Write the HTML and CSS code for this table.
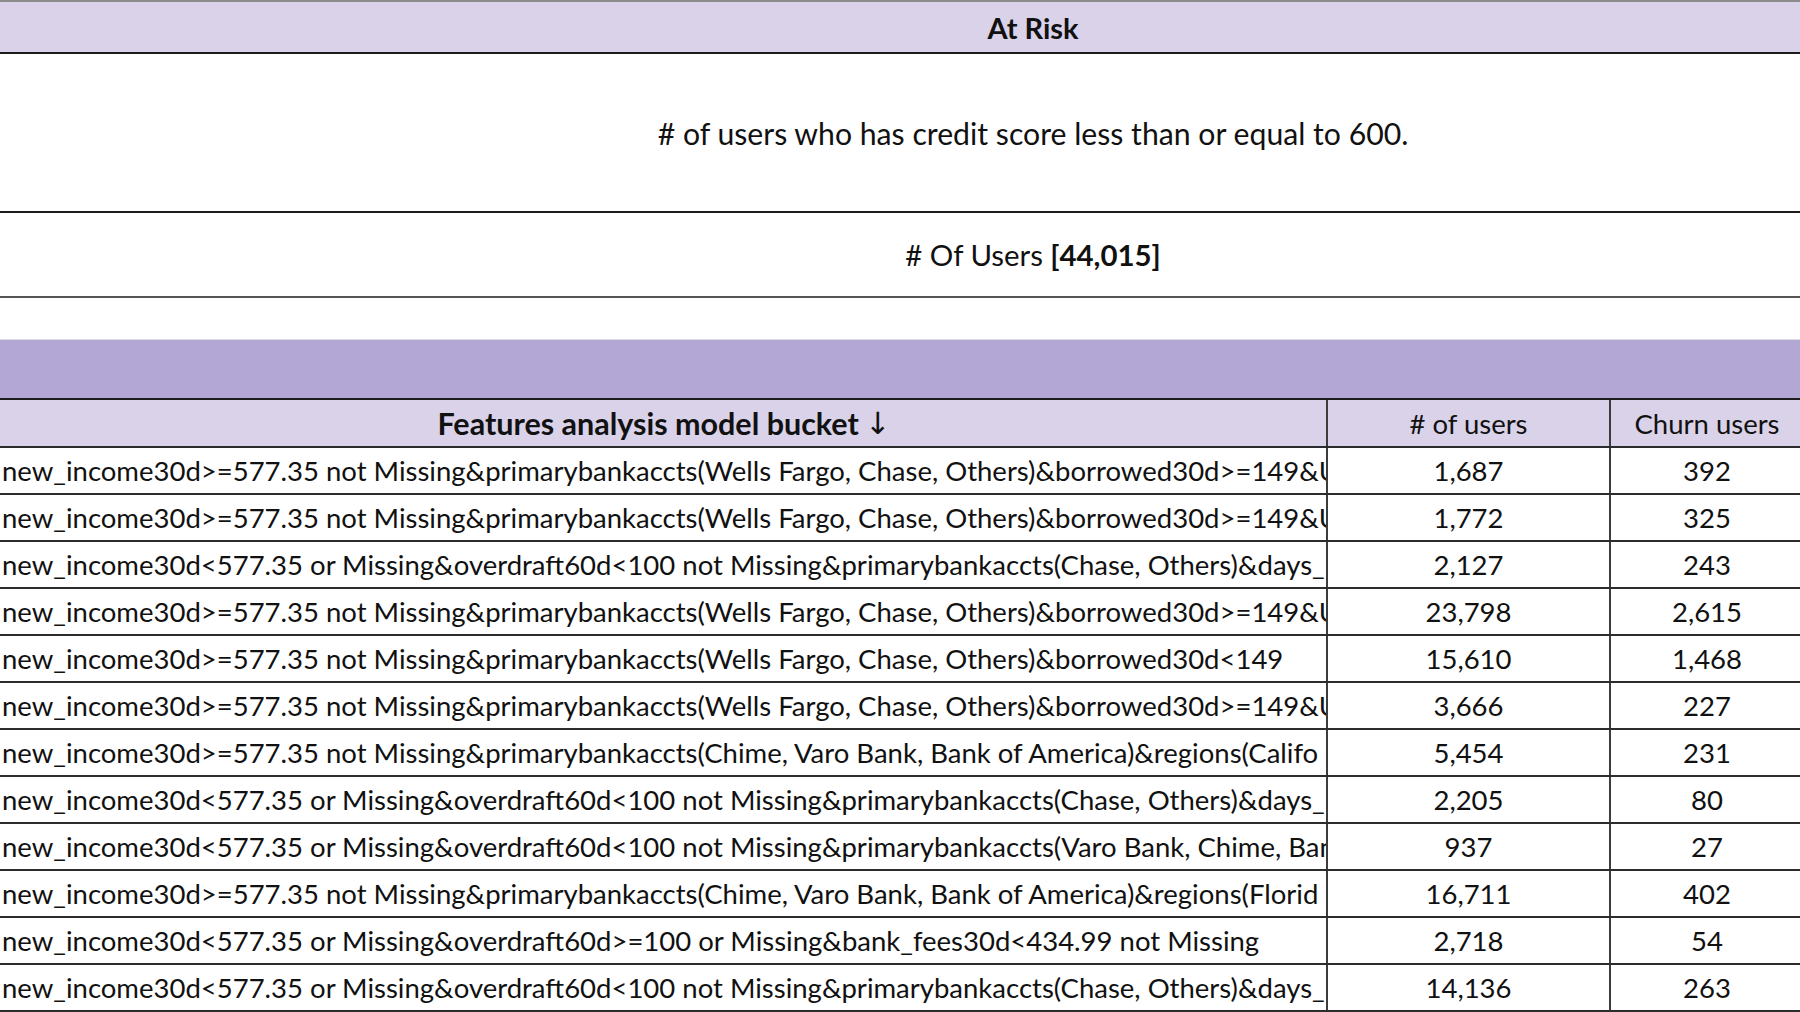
FILE: index.html
```html
<!DOCTYPE html>
<html lang="en">
<head>
<meta charset="utf-8">
<title>At Risk</title>
<link rel="stylesheet" href="styles.css">
</head>
<body>
<div class="sheet">
  <div class="title">At Risk</div>
  <div class="desc"># of users who has credit score less than or equal to 600.</div>
  <div class="count"># Of Users <b>[44,015]</b></div>
  <div class="spacer"></div>
  <div class="band"></div>
  <div class="grid">
    <div class="row head">
      <div class="cell c1 feat">Features analysis model bucket <span class="arrow">↓</span></div>
      <div class="cell c2"># of users</div>
      <div class="cell c3">Churn users</div>
      <div class="cell c4"></div>
    </div>
    <div class="row"><div class="cell c1">new_income30d&gt;=577.35 not Missing&amp;primarybankaccts(Wells Fargo, Chase, Others)&amp;borrowed30d&gt;=149&amp;U</div><div class="cell c2">1,687</div><div class="cell c3">392</div><div class="cell c4"></div></div>
    <div class="row"><div class="cell c1">new_income30d&gt;=577.35 not Missing&amp;primarybankaccts(Wells Fargo, Chase, Others)&amp;borrowed30d&gt;=149&amp;U</div><div class="cell c2">1,772</div><div class="cell c3">325</div><div class="cell c4"></div></div>
    <div class="row"><div class="cell c1">new_income30d&lt;577.35 or Missing&amp;overdraft60d&lt;100 not Missing&amp;primarybankaccts(Chase, Others)&amp;days_</div><div class="cell c2">2,127</div><div class="cell c3">243</div><div class="cell c4"></div></div>
    <div class="row"><div class="cell c1">new_income30d&gt;=577.35 not Missing&amp;primarybankaccts(Wells Fargo, Chase, Others)&amp;borrowed30d&gt;=149&amp;U</div><div class="cell c2">23,798</div><div class="cell c3">2,615</div><div class="cell c4"></div></div>
    <div class="row"><div class="cell c1">new_income30d&gt;=577.35 not Missing&amp;primarybankaccts(Wells Fargo, Chase, Others)&amp;borrowed30d&lt;149</div><div class="cell c2">15,610</div><div class="cell c3">1,468</div><div class="cell c4"></div></div>
    <div class="row"><div class="cell c1">new_income30d&gt;=577.35 not Missing&amp;primarybankaccts(Wells Fargo, Chase, Others)&amp;borrowed30d&gt;=149&amp;U</div><div class="cell c2">3,666</div><div class="cell c3">227</div><div class="cell c4"></div></div>
    <div class="row"><div class="cell c1">new_income30d&gt;=577.35 not Missing&amp;primarybankaccts(Chime, Varo Bank, Bank of America)&amp;regions(Califo</div><div class="cell c2">5,454</div><div class="cell c3">231</div><div class="cell c4"></div></div>
    <div class="row"><div class="cell c1">new_income30d&lt;577.35 or Missing&amp;overdraft60d&lt;100 not Missing&amp;primarybankaccts(Chase, Others)&amp;days_</div><div class="cell c2">2,205</div><div class="cell c3">80</div><div class="cell c4"></div></div>
    <div class="row"><div class="cell c1">new_income30d&lt;577.35 or Missing&amp;overdraft60d&lt;100 not Missing&amp;primarybankaccts(Varo Bank, Chime, Ban</div><div class="cell c2">937</div><div class="cell c3">27</div><div class="cell c4"></div></div>
    <div class="row"><div class="cell c1">new_income30d&gt;=577.35 not Missing&amp;primarybankaccts(Chime, Varo Bank, Bank of America)&amp;regions(Florid</div><div class="cell c2">16,711</div><div class="cell c3">402</div><div class="cell c4"></div></div>
    <div class="row"><div class="cell c1">new_income30d&lt;577.35 or Missing&amp;overdraft60d&gt;=100 or Missing&amp;bank_fees30d&lt;434.99 not Missing</div><div class="cell c2">2,718</div><div class="cell c3">54</div><div class="cell c4"></div></div>
    <div class="row"><div class="cell c1">new_income30d&lt;577.35 or Missing&amp;overdraft60d&lt;100 not Missing&amp;primarybankaccts(Chase, Others)&amp;days_</div><div class="cell c2">14,136</div><div class="cell c3">263</div><div class="cell c4"></div></div>
  </div>
</div>
</body>
</html>
```
FILE: styles.css
```css
html, body {
  margin: 0;
  padding: 0;
  overflow: hidden;
  background: #ffffff;
}
.sheet {
  width: 2066px;
  font-family: Lato, "Open Sans", sans-serif;
  font-size: 27.5px;
  color: #111111;
  border-top: 2px solid #8c8c8c;
}
.title {
  height: 50px;
  background: #d9d2e9;
  border-bottom: 2px solid #1c1c1c;
  display: flex;
  align-items: center;
  justify-content: center;
  font-weight: 700;
  font-size: 29px;
}
.desc {
  height: 157px;
  border-bottom: 2px solid #1c1c1c;
  display: flex;
  align-items: center;
  justify-content: center;
  font-size: 30.2px;
}
.count {
  height: 83px;
  border-bottom: 2px solid #555555;
  display: flex;
  align-items: center;
  justify-content: center;
  font-size: 29.4px;
}
.count b {
  font-weight: 700;
  margin-left: 0.25em;
}
.spacer {
  height: 41px;
  border-bottom: 1px solid #dddddd;
}
.band {
  height: 58px;
  background: #b3a7d6;
  border-bottom: 2px solid #1c1c1c;
}
.row {
  display: grid;
  grid-template-columns: 1328px 283px 194px 1fr;
  height: 47px;
  border-bottom: 2px solid #2c2c2c;
  box-sizing: border-box;
}
.row.head {
  height: 48px;
  background: #d9d2e9;
}
.cell {
  display: flex;
  align-items: center;
  justify-content: center;
  white-space: nowrap;
  overflow: hidden;
  border-right: 2px solid #3c3c3c;
}
.cell.c1 {
  justify-content: flex-start;
  padding-left: 2px;
}
.row.head .cell.c1 {
  justify-content: center;
}
.cell.c4 {
  border-right: none;
}
.feat {
  font-weight: 700;
  font-size: 30.5px;
}
.arrow {
  font-family: "DejaVu Sans", sans-serif;
  font-weight: 400;
  margin-left: 0.2em;
}
```
